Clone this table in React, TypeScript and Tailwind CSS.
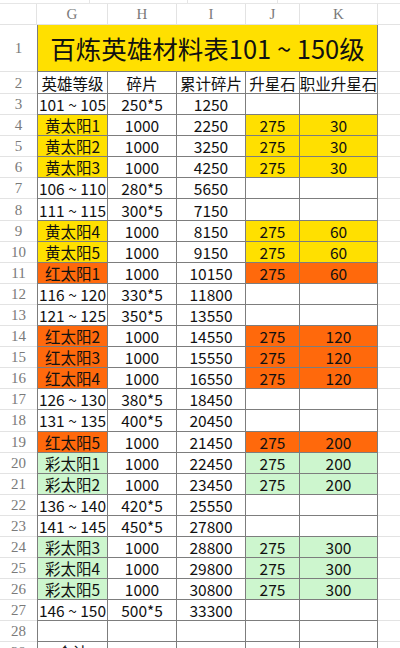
import React from "react";

type Fill = "y" | "o" | "g" | "";
type Row = { n: number; c: string[]; f: Fill };

const rows: Row[] = [
  { n: 3, c: ["101 ~ 105", "250*5", "1250", "", ""], f: "" },
  { n: 4, c: ["黄太阳1", "1000", "2250", "275", "30"], f: "y" },
  { n: 5, c: ["黄太阳2", "1000", "3250", "275", "30"], f: "y" },
  { n: 6, c: ["黄太阳3", "1000", "4250", "275", "30"], f: "y" },
  { n: 7, c: ["106 ~ 110", "280*5", "5650", "", ""], f: "" },
  { n: 8, c: ["111 ~ 115", "300*5", "7150", "", ""], f: "" },
  { n: 9, c: ["黄太阳4", "1000", "8150", "275", "60"], f: "y" },
  { n: 10, c: ["黄太阳5", "1000", "9150", "275", "60"], f: "y" },
  { n: 11, c: ["红太阳1", "1000", "10150", "275", "60"], f: "o" },
  { n: 12, c: ["116 ~ 120", "330*5", "11800", "", ""], f: "" },
  { n: 13, c: ["121 ~ 125", "350*5", "13550", "", ""], f: "" },
  { n: 14, c: ["红太阳2", "1000", "14550", "275", "120"], f: "o" },
  { n: 15, c: ["红太阳3", "1000", "15550", "275", "120"], f: "o" },
  { n: 16, c: ["红太阳4", "1000", "16550", "275", "120"], f: "o" },
  { n: 17, c: ["126 ~ 130", "380*5", "18450", "", ""], f: "" },
  { n: 18, c: ["131 ~ 135", "400*5", "20450", "", ""], f: "" },
  { n: 19, c: ["红太阳5", "1000", "21450", "275", "200"], f: "o" },
  { n: 20, c: ["彩太阳1", "1000", "22450", "275", "200"], f: "g" },
  { n: 21, c: ["彩太阳2", "1000", "23450", "275", "200"], f: "g" },
  { n: 22, c: ["136 ~ 140", "420*5", "25550", "", ""], f: "" },
  { n: 23, c: ["141 ~ 145", "450*5", "27800", "", ""], f: "" },
  { n: 24, c: ["彩太阳3", "1000", "28800", "275", "300"], f: "g" },
  { n: 25, c: ["彩太阳4", "1000", "29800", "275", "300"], f: "g" },
  { n: 26, c: ["彩太阳5", "1000", "30800", "275", "300"], f: "g" },
  { n: 27, c: ["146 ~ 150", "500*5", "33300", "", ""], f: "" },
  { n: 28, c: ["", "", "", "", ""], f: "" },
  { n: 29, c: ["合计", "", "", "", ""], f: "" },
];

const widths = ["w-[71px]", "w-[69px]", "w-[69px]", "w-[54px]", "w-[78px]"];

function fillClass(f: Fill, i: number) {
  const colored = i === 0 || i === 3 || i === 4;
  if (!colored) return "bg-white";
  if (f === "y") return "bg-[#ffe000]";
  if (f === "o") return "bg-[#ff690c]";
  if (f === "g") return "bg-[#cdf6ce]";
  return "bg-white";
}

const cellFont = { fontFamily: '"Noto Sans CJK SC", "Noto Sans", sans-serif' };
const serif = { fontFamily: '"Liberation Serif", "DejaVu Serif", serif' };

export default function App() {
  return (
    <div className="w-[400px] h-[648px] overflow-hidden bg-white text-[#111]" style={cellFont}>
      {/* top partial strip */}
      <div className="flex h-[4px] border-b border-[#e6e6e6]">
        <div className="w-[90px] border-r border-[#e6e6e6]" />
        <div className="w-[98px] border-r border-[#e6e6e6]" />
        <div className="w-[90px] border-r border-[#e6e6e6]" />
        <div className="flex-1" />
      </div>
      {/* column letters */}
      <div className="flex h-[21px] border-b border-[#e3e3e3] text-[15px] leading-[20px] text-[#7a7a7a]" style={serif}>
        <div className="w-[37px] border-r border-[#e3e3e3]" />
        {["G", "H", "I", "J", "K"].map((l, i) => (
          <div key={l} className={`${widths[i]} border-r border-[#e3e3e3] flex items-center justify-center`}>
            {l}
          </div>
        ))}
        <div className="flex-1" />
      </div>
      {/* row 1 title */}
      <div className="flex h-[47px]">
        <div className="w-[37px] border-b border-[#e3e3e3] flex items-center justify-center text-[15px] leading-[20px] text-[#7a7a7a]" style={serif}>
          1
        </div>
        <div className="w-[341px] bg-[#ffe000] border border-t-0 border-[#7d7d7d] flex items-center justify-center text-[25.5px] leading-[34px] whitespace-nowrap">
          百炼英雄材料表101 ~ 150级
        </div>
        <div className="flex-1 border-b border-[#e3e3e3]" />
      </div>
      {/* row 2 headers */}
      <div className="flex h-[22px]">
        <div className="w-[37px] border-b border-[#e3e3e3] flex items-center justify-center text-[15px] leading-[20px] text-[#7a7a7a]" style={serif}>
          2
        </div>
        {["英雄等级", "碎片", "累计碎片", "升星石", "职业升星石"].map((t, i) => (
          <div
            key={t}
            className={`${widths[i]} ${i === 0 ? "border-l" : ""} border-r border-b border-[#7d7d7d] flex items-center justify-center text-[15.5px] leading-[20px] whitespace-nowrap`}
          >
            {t}
          </div>
        ))}
        <div className="flex-1 border-b border-[#e3e3e3]" />
      </div>
      {rows.map((r) => (
        <div key={r.n} className="flex h-[21.1px]">
          <div className="w-[37px] border-b border-[#e3e3e3] flex items-center justify-center text-[15px] leading-[20px] text-[#7a7a7a]" style={serif}>
            {r.n}
          </div>
          {r.c.map((t, i) => (
            <div
              key={i}
              className={`${widths[i]} ${fillClass(r.f, i)} ${i === 0 ? "border-l" : ""} border-r border-b border-[#7d7d7d] flex items-center justify-center text-[15.5px] leading-[20px] whitespace-nowrap`}
            >
              {t}
            </div>
          ))}
          <div className="flex-1 border-b border-[#e3e3e3]" />
        </div>
      ))}
    </div>
  );
}
